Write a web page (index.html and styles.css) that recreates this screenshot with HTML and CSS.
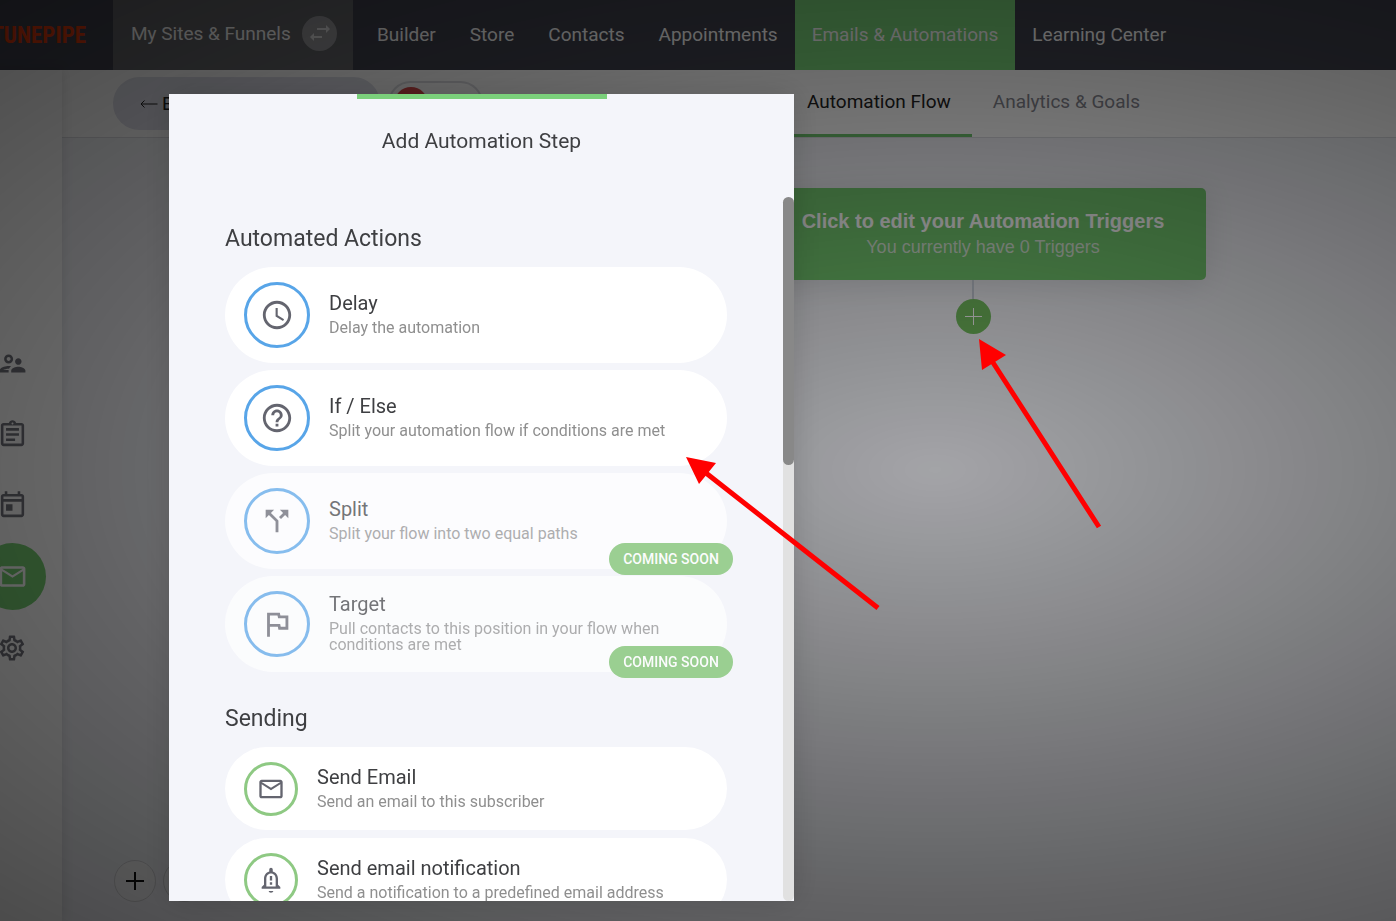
FILE: index.html
```html
<!DOCTYPE html>
<html lang="en">
<head>
    <meta charset="UTF-8">
    <meta name="viewport" content="width=device-width, initial-scale=1.0">
    <title>Automation Flow</title>
    <link rel="stylesheet" href="styles.css">
</head>
<body>
    <header class="topbar">
        <a class="logo" href="#">TUNEPIPE</a>
        <a class="sites" href="#">
            My Sites &amp; Funnels
            <span class="swap">
                <svg viewBox="0 0 24 24" width="24" height="24"><path d="M22 8l-4-4v3H9v2h9v3l4-4zM2 16l4 4v-3h8v-2H6v-3l-4 4z"/></svg>
            </span>
        </a>
        <nav class="main-nav">
            <a href="#">Builder</a>
            <a href="#">Store</a>
            <a href="#">Contacts</a>
            <a href="#">Appointments</a>
            <a href="#" class="active">Emails &amp; Automations</a>
            <a href="#">Learning Center</a>
        </nav>
    </header>

    <div class="layout">
        <nav class="sidebar">
            <a href="#" aria-label="Contacts">
                <svg viewBox="0 0 24 24" width="31" height="31"><path d="M9 12c1.930 0 3.500-1.570 3.500-3.500S10.930 5 9 5 5.500 6.570 5.500 8.500 7.070 12 9 12zm0-5c.83 0 1.500.67 1.500 1.500S9.830 10 9 10s-1.500-.67-1.500-1.500S8.170 7 9 7zm.05 10H4.770c.99-.5 2.700-1 4.230-1 .11 0 .23.01.34.010.34-.73.930-1.330 1.640-1.810-.73-.13-1.420-.2-1.980-.2-2.340 0-7 1.170-7 3.500V19h7v-1.500c0-.17.02-.34.050-.5zm7.450-2.500c-1.840 0-5.500 1.010-5.500 3V19h11v-1.500c0-1.990-3.660-3-5.500-3zm1.210-1.820c.76-.43 1.290-1.240 1.290-2.180 0-1.380-1.120-2.500-2.500-2.500S14 9.120 14 10.500c0 .94.53 1.750 1.290 2.180.36.2.77.32 1.210.32s.85-.12 1.210-.32z"/></svg>
            </a>
            <a href="#" aria-label="Forms">
                <svg viewBox="0 0 24 24" width="31" height="31"><path d="M7 15h7v2H7zm0-4h10v2H7zm0-4h10v2H7zm12-4h-4.180C14.400 1.840 13.300 1 12 1c-1.300 0-2.400.84-2.820 2H5c-1.100 0-2 .9-2 2v14c0 1.100.9 2 2 2h14c1.100 0 2-.9 2-2V5c0-1.100-.9-2-2-2zm-7-.25c.41 0 .75.34.75.75s-.34.75-.75.75-.75-.34-.75-.75.34-.75.75-.75zM19 19H5V5h14v14z"/></svg>
            </a>
            <a href="#" aria-label="Calendar">
                <svg viewBox="0 0 24 24" width="31" height="31"><path d="M19 3h-1V1h-2v2H8V1H6v2H5c-1.110 0-2 .9-2 2v14c0 1.100.89 2 2 2h14c1.100 0 2-.9 2-2V5c0-1.100-.9-2-2-2zm0 16H5V9h14v10zM5 7V5h14v2H5zm2 4h5v5H7z"/></svg>
            </a>
            <a href="#" class="active" aria-label="Emails">
                <svg viewBox="0 0 24 24" width="31" height="31"><path d="M22 6c0-1.100-.9-2-2-2H4c-1.100 0-2 .9-2 2v12c0 1.100.9 2 2 2h16c1.100 0 2-.9 2-2V6zm-2 0l-8 5-8-5h16zm0 12H4V8l8 5 8-5v10z"/></svg>
            </a>
            <a href="#" aria-label="Settings">
                <svg viewBox="0 0 24 24" width="30" height="30"><path d="M19.430 12.980c.04-.32.07-.64.07-.98 0-.34-.03-.66-.07-.98l2.110-1.650c.19-.15.24-.42.12-.64l-2-3.460c-.09-.16-.26-.25-.44-.25-.06 0-.12.01-.17.03l-2.490 1c-.52-.4-1.080-.73-1.690-.98l-.38-2.650C14.460 2.180 14.250 2 14 2h-4c-.25 0-.46.18-.49.42l-.38 2.650c-.61.25-1.170.59-1.690.98l-2.490-1c-.06-.02-.12-.03-.18-.03-.17 0-.34.09-.43.25l-2 3.460c-.13.22-.07.49.12.64l2.110 1.650c-.04.32-.07.65-.07.98 0 .33.03.66.07.98l-2.110 1.650c-.19.15-.24.42-.12.64l2 3.460c.09.16.26.25.44.25.06 0 .12-.01.17-.03l2.490-1c.52.4 1.080.73 1.690.98l.38 2.650c.03.24.24.42.49.42h4c.25 0 .46-.18.49-.42l.38-2.650c.61-.25 1.170-.59 1.690-.98l2.490 1c.06.02.12.03.18.03.17 0 .34-.09.43-.25l2-3.460c.12-.22.07-.49-.12-.64l-2.110-1.650zm-1.980-1.710c.04.31.05.52.05.73 0 .21-.02.43-.05.73l-.14 1.130.89.7 1.080.84-.7 1.210-1.270-.51-1.040-.42-.9.68c-.43.32-.84.56-1.250.73l-1.060.43-.16 1.130-.2 1.350h-1.400l-.19-1.350-.16-1.130-1.060-.43c-.43-.18-.83-.41-1.230-.71l-.91-.7-1.060.43-1.270.51-.7-1.210 1.080-.84.89-.7-.14-1.130c-.03-.31-.05-.54-.05-.74s.02-.43.05-.73l.14-1.130-.89-.7-1.080-.84.7-1.210 1.270.51 1.040.42.9-.68c.43-.32.84-.56 1.250-.73l1.060-.43.16-1.130.2-1.350h1.390l.19 1.350.16 1.130 1.060.43c.43.18.83.41 1.230.71l.91.7 1.060-.43 1.270-.51.7 1.210-1.070.85-.89.7.14 1.130zM12 8c-2.210 0-4 1.790-4 4s1.790 4 4 4 4-1.790 4-4-1.790-4-4-4zm0 6c-1.100 0-2-.9-2-2s.9-2 2-2 2 .9 2 2-.9 2-2 2z"/></svg>
            </a>
        </nav>

        <main class="content">
            <div class="toolbar">
                <button class="back">
                    <svg viewBox="0 0 18 10" width="18" height="10"><path d="M17.500 5H1M4.500 1.500L1 5l3.500 3.500"/></svg>
                    Back to Automations
                </button>
                <button class="toggle" aria-label="Automation status"><span class="knob"></span></button>
                <nav class="tabs">
                    <a href="#" class="active">Automation Flow</a>
                    <a href="#">Analytics &amp; Goals</a>
                </nav>
            </div>
            <div class="canvas">
                <div class="flow">
                    <button class="trigger">
                        <strong>Click to edit your Automation Triggers</strong>
                        <span>You currently have 0 Triggers</span>
                    </button>
                    <div class="line"></div>
                    <button class="add-step" aria-label="Add step">
                        <svg viewBox="0 0 17 17" width="17" height="17"><path d="M8.500 0v17M0 8.500h17"/></svg>
                    </button>
                </div>
                <div class="zoom-controls">
                    <button aria-label="Zoom in"><svg viewBox="0 0 18 18" width="18" height="18"><path d="M9 0v18M0 9h18"/></svg></button>
                    <button aria-label="Zoom out"><svg viewBox="0 0 18 18" width="18" height="18"><path d="M0 9h18"/></svg></button>
                </div>
            </div>
        </main>
    </div>

    <div class="overlay"></div>

    <section class="modal" role="dialog" aria-labelledby="modalTitle">
        <div class="progress"></div>
        <h1 id="modalTitle">Add Automation Step</h1>
        <div class="modal-body">
            <div class="steps">
                <h2>Automated Actions</h2>
                <div class="group">
                    <button class="step">
                        <span class="icon"><svg viewBox="0 0 24 24" width="34" height="34"><path d="M11.990 2C6.470 2 2 6.480 2 12s4.470 10 9.990 10C17.520 22 22 17.520 22 12S17.520 2 11.990 2zM12 20c-4.420 0-8-3.580-8-8s3.580-8 8-8 8 3.580 8 8-3.580 8-8 8zm.5-13H11v6l5.250 3.150.75-1.230-4.500-2.670z"/></svg></span>
                        <span class="text"><b>Delay</b><small>Delay the automation</small></span>
                    </button>
                    <button class="step">
                        <span class="icon"><svg viewBox="0 0 24 24" width="34" height="34"><path d="M11 18h2v-2h-2v2zm1-16C6.480 2 2 6.480 2 12s4.480 10 10 10 10-4.480 10-10S17.520 2 12 2zm0 18c-4.410 0-8-3.590-8-8s3.590-8 8-8 8 3.590 8 8-3.590 8-8 8zm0-14c-2.210 0-4 1.790-4 4h2c0-1.100.9-2 2-2s2 .9 2 2c0 2-3 1.750-3 5h2c0-2.250 3-2.500 3-5 0-2.210-1.790-4-4-4z"/></svg></span>
                        <span class="text"><b>If / Else</b><small>Split your automation flow if conditions are met</small></span>
                    </button>
                    <button class="step soon">
                        <span class="icon"><svg viewBox="0 0 24 24" width="34" height="34"><path d="M14 4l2.290 2.290-2.880 2.880 1.420 1.420 2.880-2.880L20 10V4zm-4 0H4v6l2.290-2.290 4.710 4.700V20h2v-8.410l-5.290-5.300z"/></svg></span>
                        <span class="text"><b>Split</b><small>Split your flow into two equal paths</small></span>
                        <span class="badge">COMING SOON</span>
                    </button>
                    <button class="step soon">
                        <span class="icon"><svg viewBox="0 0 24 24" width="34" height="34"><path d="M12.360 6l.4 2H18v6h-3.360l-.4-2H7V6h5.360M14 4H5v17h2v-7h5.600l.4 2h7V6h-5.600L14 4z"/></svg></span>
                        <span class="text"><b>Target</b><small>Pull contacts to this position in your flow when conditions are met</small></span>
                        <span class="badge">COMING SOON</span>
                    </button>
                </div>
                <h2>Sending</h2>
                <div class="group sending">
                    <button class="step">
                        <span class="icon"><svg viewBox="0 0 24 24" width="28" height="28"><path d="M22 6c0-1.100-.9-2-2-2H4c-1.100 0-2 .9-2 2v12c0 1.100.9 2 2 2h16c1.100 0 2-.9 2-2V6zm-2 0l-8 5-8-5h16zm0 12H4V8l8 5 8-5v10z"/></svg></span>
                        <span class="text"><b>Send Email</b><small>Send an email to this subscriber</small></span>
                    </button>
                    <button class="step">
                        <span class="icon"><svg viewBox="0 0 24 24" width="28" height="28"><path d="M12 23c1.100 0 2-.9 2-1.500h-4c0 .6.9 1.500 2 1.500zm6-7v-5c0-3.070-1.630-5.640-4.500-6.320V3a1.500 1.500 0 0 0-3 0v1.680C7.640 5.360 6 7.920 6 11v5l-2 2v1.500h16V18l-2-2zm-2 1.500H8V11c0-2.480 1.510-4.500 4-4.500s4 2.020 4 4.500v6.500zM11 8.500h2v4h-2zm0 5.500h2v2h-2z"/></svg></span>
                        <span class="text"><b>Send email notification</b><small>Send a notification to a predefined email address</small></span>
                    </button>
                </div>
            </div>
            <div class="scrollbar"><div class="thumb"></div></div>
        </div>
    </section>

    <!-- pointers to the add button and the If / Else step -->
    <svg class="arrows" width="1396" height="921" viewBox="0 0 1396 921">
        <path class="shaft" d="M706 473L878 608M992 361L1099 527"/>
        <path class="head" d="M686 457l30 6-17 21zM979 339l27 16-24 15z"/>
    </svg>
</body>
</html>
```

FILE: styles.css
```css
* {
    box-sizing: border-box;
}

body {
    margin: 0;
    height: 100vh;
    display: flex;
    flex-direction: column;
    overflow: hidden;
    font-family: Roboto, "Liberation Sans", sans-serif;
    color: #3e3f42;
    background: #f4f5fa;
}

a {
    color: inherit;
    text-decoration: none;
}

button {
    border: none;
    padding: 0;
    font-family: inherit;
    color: inherit;
    cursor: pointer;
}

svg {
    display: block;
    fill: currentColor;
}

/* top bar */
.topbar {
    display: flex;
    height: 70px;
    flex-shrink: 0;
    background: #40424e;
    color: #fff;
    font-size: 19px;
    white-space: nowrap;
}

.logo {
    width: 113px;
    padding-right: 27px;
    display: flex;
    align-items: center;
    justify-content: flex-end;
    overflow: hidden;
    color: #e03a0c;
    font-family: "Roboto Condensed", "Liberation Sans Narrow", "Liberation Sans", sans-serif;
    font-size: 23px;
    font-weight: bold;
}

.sites {
    width: 240px;
    padding: 0 16px 4px 18px;
    display: flex;
    align-items: center;
    justify-content: space-between;
    background: #646569;
}

.swap {
    width: 35px;
    height: 35px;
    display: flex;
    align-items: center;
    justify-content: center;
    border-radius: 50%;
    background: #98989c;
    color: #dcdcde;
}

.main-nav {
    display: flex;
    padding-left: 7px;
}

.main-nav a {
    display: flex;
    align-items: center;
    padding: 0 17px 2px;
}

.main-nav .active {
    background: #7bd67b;
}

/* side bar */
.layout {
    display: flex;
    flex: 1;
    min-height: 0;
}

.sidebar {
    width: 100px;
    margin-left: -38px;
    padding-top: 260px;
    display: flex;
    flex-direction: column;
    align-items: center;
    gap: 4px;
    flex-shrink: 0;
    background: #fff;
    color: #74757e;
    box-shadow: 0 0 12px rgba(0, 0, 0, 0.12);
    z-index: 1;
}

.sidebar a {
    width: 67px;
    height: 67px;
    display: flex;
    align-items: center;
    justify-content: center;
    border-radius: 50%;
}

.sidebar .active {
    background: #77cf73;
    color: #fff;
}

/* toolbar */
.content {
    flex: 1;
    min-width: 0;
    display: flex;
    flex-direction: column;
}

.toolbar {
    height: 68px;
    padding-left: 51px;
    display: flex;
    align-items: center;
    flex-shrink: 0;
    background: #fff;
    border-bottom: 1px solid #dcdde2;
    font-size: 19px;
    white-space: nowrap;
}

.back {
    width: 267px;
    height: 53px;
    padding-left: 27px;
    display: flex;
    align-items: center;
    gap: 4px;
    border-radius: 27px;
    background: #dfe0ea;
    color: #222;
    font-size: 19px;
}

.back svg,
.add-step svg,
.zoom-controls svg {
    fill: none;
    stroke: currentColor;
}

.toggle {
    width: 95px;
    height: 45px;
    margin-left: 8px;
    padding-left: 4px;
    border: 2px solid #dcdde2;
    border-radius: 23px;
    background: #fff;
}

.knob {
    display: block;
    width: 34px;
    height: 34px;
    border-radius: 50%;
    background: #d84a4a;
}

.tabs {
    display: flex;
    height: 100%;
    margin-left: 303px;
}

.tabs a {
    padding: 0 21px 1px;
    display: flex;
    align-items: center;
    border-bottom: 3px solid transparent;
    color: #85868f;
}

.tabs .active {
    color: #222;
    border-color: #6fc46f;
}

/* flow canvas */
.canvas {
    flex: 1;
    position: relative;
}

.flow {
    position: absolute;
    left: 678px;
    top: 50px;
    width: 466px;
    display: flex;
    flex-direction: column;
    align-items: center;
}

.trigger {
    width: 100%;
    height: 92px;
    padding-left: 20px;
    display: flex;
    flex-direction: column;
    align-items: center;
    justify-content: center;
    border-radius: 5px;
    background: #75cb71;
    color: #fff;
    box-shadow: 0 4px 30px rgba(0, 0, 0, 0.1);
    font-family: "Liberation Sans", Arial, sans-serif;
    font-size: 18px;
    line-height: 26px;
}

.trigger strong {
    font-size: 20px;
}

.trigger span {
    color: #d8e6d7;
}

.line {
    width: 2px;
    height: 19px;
    background: #c6ccd8;
}

.add-step {
    width: 35px;
    height: 35px;
    display: flex;
    align-items: center;
    justify-content: center;
    border-radius: 50%;
    background: #74bf60;
    color: #fff;
}

.zoom-controls {
    position: absolute;
    left: 52px;
    bottom: 19px;
    display: flex;
    gap: 7px;
}

.zoom-controls button {
    width: 42px;
    height: 42px;
    display: flex;
    align-items: center;
    justify-content: center;
    border: 1px solid #d5d5d8;
    border-radius: 50%;
    background: #f9f9fa;
    color: #111;
}

.zoom-controls svg {
    stroke-width: 2;
}

/* dimmed backdrop */
.overlay {
    position: fixed;
    inset: 0;
    z-index: 5;
    background: radial-gradient(ellipse farthest-corner at 67% 51%, rgba(0, 0, 0, 0.33), rgba(0, 0, 0, 0.52) 45%, rgba(0, 0, 0, 0.6) 65%, rgba(0, 0, 0, 0.71));
}

/* modal */
.modal {
    position: fixed;
    left: 169px;
    top: 94px;
    bottom: 20px;
    width: 625px;
    z-index: 6;
    display: flex;
    flex-direction: column;
    background: #f4f5fa;
    box-shadow: 0 0 30px rgba(0, 0, 0, 0.15);
}

.progress {
    width: 40%;
    height: 5px;
    margin: 0 auto;
    background: #7bd07b;
}

.modal h1 {
    margin: 0;
    padding: 30px 0 44px;
    font-size: 21px;
    line-height: 24px;
    font-weight: 400;
    text-align: center;
}

.modal-body {
    flex: 1;
    min-height: 0;
    display: flex;
}

.steps {
    flex: 1;
    padding: 0 56px;
    overflow: hidden;
}

.modal h2 {
    margin: 0;
    padding: 28px 0 14px;
    font-size: 23px;
    line-height: 28px;
    font-weight: 400;
}

.group {
    display: flex;
    flex-direction: column;
    gap: 7px;
    padding-bottom: 5px;
}

.step {
    position: relative;
    height: 96px;
    flex-shrink: 0;
    padding: 0 50px 0 19px;
    display: flex;
    align-items: center;
    gap: 19px;
    border-radius: 48px;
    background: #fff;
    text-align: left;
}

.soon {
    opacity: 0.7;
}

.icon {
    width: 66px;
    height: 66px;
    flex-shrink: 0;
    display: flex;
    align-items: center;
    justify-content: center;
    border: 3px solid #58a5e8;
    border-radius: 50%;
    color: #64656f;
}

.text {
    display: flex;
    flex-direction: column;
    gap: 5px;
    padding-bottom: 3px;
}

.text b {
    font-size: 20px;
    line-height: 24px;
    font-weight: 400;
}

.text small {
    font-size: 16px;
    line-height: 16px;
    color: #8f8f8f;
}

.badge {
    position: absolute;
    right: -6px;
    bottom: -6px;
    width: 124px;
    height: 32px;
    border-radius: 16px;
    background: #75bf65;
    color: #fff;
    font-size: 14px;
    font-weight: 500;
    line-height: 32px;
    text-align: center;
}

.sending {
    gap: 8px;
}

.sending .step {
    height: 83px;
}

.sending .icon {
    width: 54px;
    height: 54px;
    border-color: #8ec983;
}

.scrollbar {
    width: 11px;
    border-radius: 6px;
    background: #e1e1e1;
}

.thumb {
    height: 38%;
    border-radius: 6px;
    background: #888;
}

/* annotation arrows */
.arrows {
    position: fixed;
    left: 0;
    top: 0;
    z-index: 7;
    pointer-events: none;
}

.shaft {
    stroke: #f00;
    stroke-width: 5;
}

.head {
    fill: #f00;
}
```
